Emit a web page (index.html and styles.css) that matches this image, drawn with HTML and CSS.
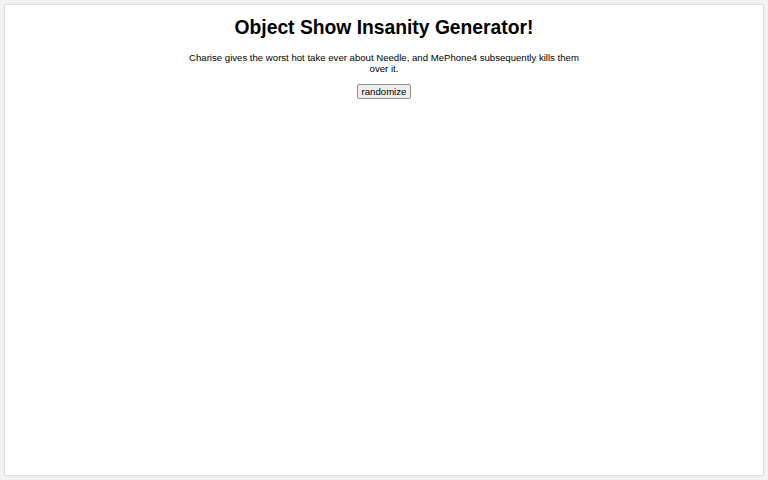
FILE: index.html
```html
<!DOCTYPE html>
<html lang="en">

<head>
  <meta charset="utf-8">
  <title>Object Show Insanity Generator!</title>
  <link rel="stylesheet" href="styles.css">
</head>

<body>
  <div class="frame">
    <h1 class="title">Object Show Insanity Generator!</h1>
    <p id="result" class="result">Charise gives the worst hot take ever about Needle, and MePhone4 subsequently kills them over it.</p>
    <button id="randomize" class="randomize">randomize</button>
  </div>
</body>

</html>
```

FILE: styles.css
```css
html,
body {
  margin: 0;
  height: 100%;
}

body {
  background-color: #f2f2f2;
  padding: 4px;
  box-sizing: border-box;
  font-family: "Liberation Sans", Arial, sans-serif;
}

.frame {
  height: 100%;
  box-sizing: border-box;
  background-color: #fff;
  border: 1px solid #dcdcdc;
  display: flex;
  flex-direction: column;
  align-items: center;
  padding-top: 12px;
}

.title {
  margin: 0;
  font-size: 19.3px;
  line-height: 22px;
  color: #000;
}

.result {
  margin: 13px 0 0;
  max-width: 400px;
  text-align: center;
  font-size: 9.6px;
  line-height: 11px;
  color: #000;
}

.randomize {
  margin-top: 10px;
  font-family: "Liberation Sans", Arial, sans-serif;
  font-size: 9.6px;
  padding: 1px 4px;
  background-color: #efefef;
  border: 1px solid #8f8f8f;
  border-radius: 2px;
  color: #000;
}
```
